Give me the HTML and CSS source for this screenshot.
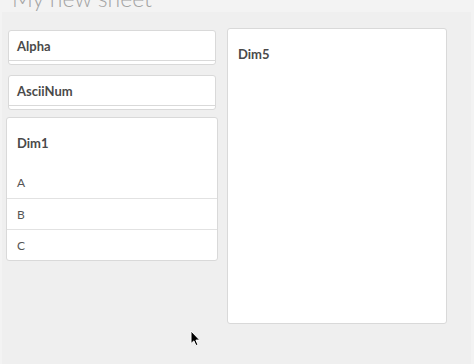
FILE: index.html
```html
<!DOCTYPE html>
<html>
<head>
<meta charset="utf-8">
<link rel="stylesheet" href="styles.css">
</head>
<body>
<div class="frame">
  <header class="sheet-head">
    <h1 class="sheet-title">My new sheet</h1>
  </header>
  <main class="board">
    <section class="col col-left">
      <div class="card card-small">
        <div class="card-head">Alpha</div>
        <div class="card-empty"></div>
      </div>
      <div class="card card-small">
        <div class="card-head">AsciiNum</div>
        <div class="card-empty"></div>
      </div>
      <div class="card card-open">
        <div class="card-head">Dim1</div>
        <ul class="rows">
          <li class="row">A</li>
          <li class="row">B</li>
          <li class="row">C</li>
        </ul>
      </div>
    </section>
    <section class="col col-right">
      <div class="card card-open card-tall">
        <div class="card-head">Dim5</div>
      </div>
    </section>
  </main>
</div>
<svg class="cursor" width="12" height="17" viewBox="0 0 12 17">
  <path d="M1 1 L1 13.5 L3.9 10.9 L5.9 15.6 L7.9 14.7 L5.9 10.1 L9.7 10.1 Z" fill="#000" stroke="#fff" stroke-width="1" stroke-linejoin="round"/>
</svg>
</body>
</html>
```
FILE: styles.css
```css
html, body {
  margin: 0;
  padding: 0;
  background: #f3f3f3;
  font-family: Lato, "Open Sans", "Liberation Sans", sans-serif;
}
.frame {
  margin: 0 3px 0 2px;
  height: 364px;
  background: #efefef;
  overflow: hidden;
}
.sheet-head {
  display: flow-root;
  height: 12px;
  background: #f3f3f3;
  padding-left: 10px;
}
.sheet-title {
  margin: -13px 0 0 0;
  font-size: 23px;
  line-height: 23px;
  font-weight: 300;
  color: #a4a4a4;
}
.board {
  display: flex;
  align-items: flex-start;
  padding: 16px 0 0 4px;
}
.col-left {
  width: 212px;
  display: flex;
  flex-direction: column;
  padding-top: 2px;
}
.col-right {
  width: 220px;
  margin-left: 9px;
}
.card {
  background: #fff;
  border: 1px solid #d9d9d9;
  border-radius: 3px;
  box-sizing: border-box;
}
.card-small {
  margin: 0 2px 10px 2px;
}
.card-small .card-head {
  height: 29px;
  padding-left: 8px;
  border-bottom: 1px solid #d9d9d9;
}
.card-empty {
  height: 3px;
}
.card-head {
  display: flex;
  align-items: center;
  font-size: 13px;
  font-weight: 700;
  color: #4a4a4a;
}
.card-open {
  margin-top: -3px;
  padding-top: 10px;
}
.card-open .card-head {
  height: 30px;
  padding-left: 10px;
}
.rows {
  list-style: none;
  margin: 9px 0 0 0;
  padding: 0;
}
.row {
  height: 30px;
  display: flex;
  align-items: center;
  padding-left: 10px;
  font-size: 12px;
  color: #555;
  border-top: 1px solid #e2e2e2;
}
.row:first-child {
  border-top: none;
  height: 31px;
}
.card-tall {
  margin-top: 0;
  height: 296px;
}
.cursor {
  position: absolute;
  left: 190px;
  top: 330px;
}
```
